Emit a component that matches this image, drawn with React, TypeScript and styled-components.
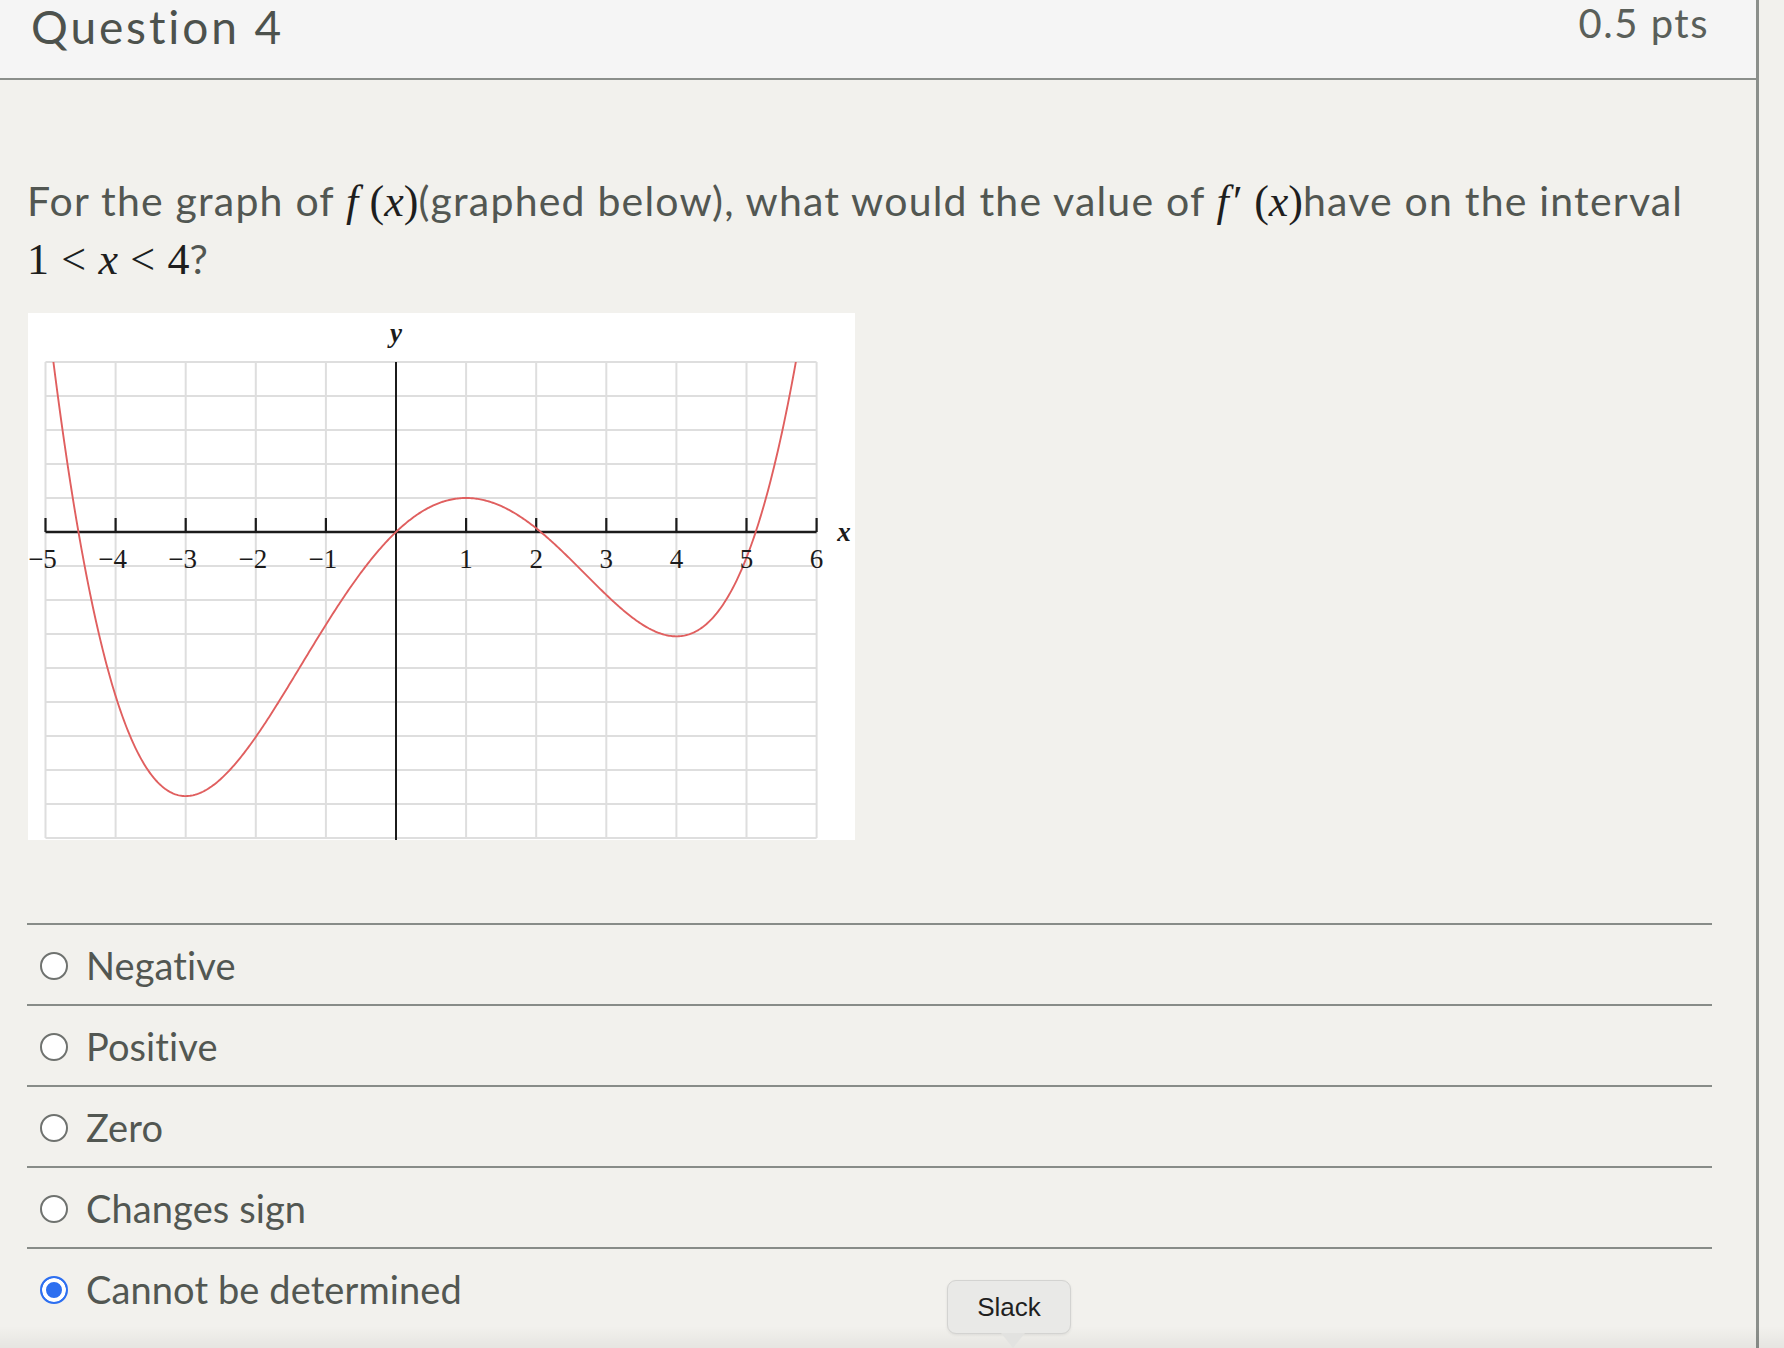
import React from "react";
import styled, { createGlobalStyle } from "styled-components";

const GlobalStyle = createGlobalStyle`
  html, body {
    margin: 0;
    padding: 0;
    background: #f2f1ed;
  }
  body {
    font-family: "Lato", "Open Sans", sans-serif;
  }
`;

const Page = styled.div`
  position: relative;
  width: 1784px;
  height: 1348px;
  overflow: hidden;
  display: flex;
  background: #f2f1ed;
`;

const Card = styled.section`
  width: 1756px;
  flex: none;
  border-right: 3px solid #8b8f8b;
  display: flex;
  flex-direction: column;
`;

const Header = styled.header`
  height: 78px;
  background: #f5f5f5;
  border-bottom: 2px solid #8b8f8b;
  display: flex;
  justify-content: space-between;
  align-items: flex-start;
  padding: 0 47px 0 31px;
  color: #4d524d;
`;

const Title = styled.h2`
  margin: 4px 0 0;
  font-weight: 400;
  font-size: 46px;
  line-height: 1;
  letter-spacing: 2.9px;
`;

const Points = styled.span`
  margin-top: 3px;
  font-size: 40px;
  line-height: 1;
  color: #5a5f5a;
  letter-spacing: 1.5px;
`;

const Body = styled.div`
  padding: 92px 0 0 27px;
  display: flex;
  flex-direction: column;
`;

const Prompt = styled.p`
  margin: 0;
  font-size: 41px;
  line-height: 57px;
  color: #525752;
  letter-spacing: 1.2px;
  width: 1722px;
`;

const MathText = styled.span`
  font-family: "Liberation Serif", "DejaVu Serif", serif;
  font-size: 44px;
  color: #1e1e1e;
  letter-spacing: 0;
  white-space: nowrap;
`;

const Var = styled.i`
  font-style: italic;
`;

const Gap = styled.span<{ $w: number }>`
  display: inline-block;
  width: ${(p) => p.$w}em;
`;

const Prime = styled.span`
  margin-left: 0.1em;
`;

const GraphFrame = styled.figure`
  margin: 25px 0 0 1px;
  width: 827px;
  height: 527px;
  background: #ffffff;
`;

const Choices = styled.div`
  margin-top: 83px;
  width: 1685px;
  display: flex;
  flex-direction: column;
`;

const Choice = styled.label`
  height: 79px;
  border-top: 2px solid #888c88;
  display: flex;
  align-items: center;
  gap: 18px;
  padding-left: 13px;
  font-size: 38px;
  color: #525752;
  letter-spacing: 0.1px;
  cursor: pointer;
`;

const Radio = styled.input`
  appearance: none;
  margin: 0;
  width: 28px;
  height: 28px;
  border-radius: 50%;
  border: 2px solid #6f726f;
  background: #ffffff;
  box-sizing: border-box;
  flex: none;
  position: relative;
  top: 1px;

  &:checked {
    border: 2px solid #2d6ff0;
    background: #2d6ff0;
    box-shadow: inset 0 0 0 4px #ffffff;
  }
`;

const BottomShade = styled.div`
  position: absolute;
  left: 0;
  right: 0;
  bottom: 0;
  height: 22px;
  background: linear-gradient(to bottom, rgba(0, 0, 0, 0), rgba(0, 0, 0, 0.05));
  pointer-events: none;
`;

const Tooltip = styled.div`
  position: absolute;
  left: 947px;
  top: 1280px;
  width: 124px;
  height: 54px;
  box-sizing: border-box;
  border-radius: 9px;
  background: #e9e9e7;
  border: 1px solid #d3d3d1;
  box-shadow: 0 1px 3px rgba(0, 0, 0, 0.08);
  display: flex;
  align-items: center;
  justify-content: center;
  font-family: "Liberation Sans", Arial, sans-serif;
  font-size: 26px;
  color: #1f1f1f;

  &::after {
    content: "";
    position: absolute;
    left: 53px;
    bottom: -15px;
    width: 0;
    height: 0;
    border-left: 12px solid transparent;
    border-right: 12px solid transparent;
    border-top: 15px solid #e2e2e0;
  }
`;

/* ---------- graph ---------- */
const OX = 368;
const OY = 219;
const UX = 70.1;
const UY = 34;
const A = 1 / 6.0833;
const f = (x: number) =>
  A * (x ** 4 / 4 - (2 * x ** 3) / 3 - (11 * x ** 2) / 2 + 12 * x);

const sx = (x: number) => OX + x * UX;
const sy = (y: number) => OY - y * UY;

function curvePath() {
  const pts: string[] = [];
  for (let i = 0; i <= 600; i++) {
    const x = -4.95 + (i / 600) * (5.75 + 4.95);
    pts.push(`${i === 0 ? "M" : "L"}${sx(x).toFixed(2)},${sy(f(x)).toFixed(2)}`);
  }
  return pts.join(" ");
}

const Graph: React.FC = () => {
  const xs = [-5, -4, -3, -2, -1, 0, 1, 2, 3, 4, 5, 6];
  const ys: number[] = [];
  for (let y = -9; y <= 5; y++) ys.push(y);
  const top = sy(5);
  const bottom = sy(-9);
  const left = sx(-5);
  const right = sx(6);
  return (
    <svg width="827" height="527" viewBox="0 0 827 527">
      <defs>
        <clipPath id="plotClip">
          <rect x={left} y={top} width={right - left} height={bottom - top + 4} />
        </clipPath>
      </defs>
      {xs.map((x) => (
        <line key={`v${x}`} x1={sx(x)} x2={sx(x)} y1={top} y2={bottom} stroke="#dedede" strokeWidth="2" />
      ))}
      {ys.map((y) => (
        <line key={`h${y}`} x1={left} x2={right} y1={sy(y)} y2={sy(y)} stroke="#dedede" strokeWidth="2" />
      ))}
      <line x1={OX} x2={OX} y1={top} y2={527} stroke="#1b1b1b" strokeWidth="2" />
      <line x1={left} x2={right} y1={OY} y2={OY} stroke="#1b1b1b" strokeWidth="2.4" />
      {xs
        .filter((x) => x !== 0)
        .map((x) => (
          <line key={`t${x}`} x1={sx(x)} x2={sx(x)} y1={OY - 14} y2={OY} stroke="#1b1b1b" strokeWidth="2.2" />
        ))}
      <path d={curvePath()} fill="none" stroke="#e05f5f" strokeWidth="1.9" clipPath="url(#plotClip)" />
      <g fontFamily="'Liberation Serif', 'DejaVu Serif', serif" fontSize="27" fill="#1b1b1b" textAnchor="middle">
        {xs
          .filter((x) => x !== 0)
          .map((x) => (
            <text key={`l${x}`} x={sx(x) - (x < 0 ? 3 : 0)} y={255}>
              {x < 0 ? `\u2212${-x}` : `${x}`}
            </text>
          ))}
        <text x={OX} y={29} fontStyle="italic" fontWeight="bold" fontSize="27">
          y
        </text>
        <text x={816} y={228} fontStyle="italic" fontWeight="bold" fontSize="27">
          x
        </text>
      </g>
    </svg>
  );
};

const options = ["Negative", "Positive", "Zero", "Changes sign", "Cannot be determined"];

export default function App() {
  return (
    <>
      <GlobalStyle />
      <Page>
        <Card>
          <Header>
            <Title>Question 4</Title>
            <Points>0.5 pts</Points>
          </Header>
          <Body>
            <Prompt>
              For the graph of{" "}
              <MathText>
                <Var>f</Var>
                <Gap $w={0.26} />(<Var>x</Var>)
              </MathText>
              (graphed below), what would the value of{" "}
              <MathText>
                <Var>f</Var>
                <Prime>′</Prime>
                <Gap $w={0.26} />(<Var>x</Var>)
              </MathText>
              have on the interval{" "}
              <MathText>
                1<Gap $w={0.28} />&lt;<Gap $w={0.28} />
                <Var>x</Var>
                <Gap $w={0.28} />&lt;<Gap $w={0.28} />4
              </MathText>
              ?
            </Prompt>
            <GraphFrame>
              <Graph />
            </GraphFrame>
            <Choices>
              {options.map((o, i) => (
                <Choice key={o}>
                  <Radio type="radio" name="q4" defaultChecked={i === options.length - 1} />
                  {o}
                </Choice>
              ))}
            </Choices>
          </Body>
        </Card>
        <BottomShade />
        <Tooltip>Slack</Tooltip>
      </Page>
    </>
  );
}
